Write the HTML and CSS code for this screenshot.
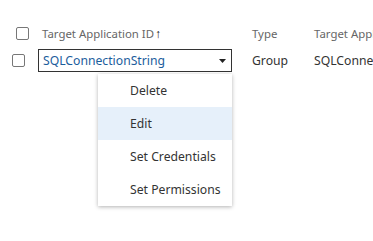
FILE: index.html
```html
<!DOCTYPE html>
<html>
  <head>
    <meta charset="utf-8">
    <title>Target Applications</title>
    <link rel="stylesheet" href="styles.css">
  </head>
  <body>
    <main class="list">
      <div class="head">
        <span class="check head-check"></span>
        <span class="col-id">Target Application ID<span class="sort">&#8593;</span></span>
        <span class="col-type">Type</span>
        <span class="col-name">Target Application Name</span>
      </div>
      <div class="row">
        <span class="check row-check"></span>
        <div class="picker">
          <span class="picker-text">SQLConnectionString</span>
          <svg class="caret" width="7" height="4" viewBox="0 0 7 4"><path d="M0 0h7L3.5 4z" fill="#222"/></svg>
        </div>
        <span class="col-type cell">Group</span>
        <span class="col-name cell">SQLConnectionString</span>
      </div>

      <ul class="menu">
        <li>Delete</li>
        <li class="active">Edit</li>
        <li>Set Credentials</li>
        <li>Set Permissions</li>
      </ul>
    </main>
  </body>
</html>
```

FILE: styles.css
```css
html, body {
  margin: 0;
  background: #fff;
  font-family: "Noto Sans", "Open Sans", sans-serif;
  overflow: hidden;
}
.list {
  position: relative;
  width: 373px;
  height: 241px;
  overflow: hidden;
}
.head {
  display: flex;
  align-items: center;
  height: 20px;
  padding-top: 23px;
  font-size: 11.4px;
  color: #666;
  white-space: nowrap;
}
.check {
  display: block;
  width: 11px;
  height: 11px;
  border: 1px solid #777;
  border-radius: 2px;
  flex: none;
}
.head-check {
  margin-left: 16px;
}
.col-id {
  margin-left: 13px;
  width: 210px;
  flex: none;
}
.sort {
  color: #111;
  font-size: 12px;
  font-weight: bold;
  margin-left: 1px;
}
.col-type {
  width: 62px;
  flex: none;
}
.col-name {
  flex: none;
}
.row {
  display: flex;
  align-items: center;
  margin-top: 6px;
  height: 23px;
  white-space: nowrap;
}
.row-check {
  margin-left: 12px;
}
.picker {
  display: flex;
  align-items: center;
  justify-content: space-between;
  margin-left: 13px;
  width: 188px;
  height: 21px;
  border: 1px solid #333;
  padding-left: 4px;
  flex: none;
  margin-right: 20px;
}
.picker-text {
  font-size: 12.2px;
  color: #1b5d9c;
}
.caret {
  margin-right: 5px;
}
.cell {
  font-size: 12.2px;
  color: #333;
}
.menu {
  position: absolute;
  left: 98px;
  top: 74px;
  width: 134px;
  margin: 0;
  padding: 0;
  list-style: none;
  background: #fff;
  box-shadow: 0 1px 4px rgba(0, 0, 0, 0.3);
}
.menu li {
  height: 33px;
  line-height: 34px;
  padding-left: 32px;
  font-size: 12.2px;
  color: #333;
}
.menu li.active {
  background: #e6f0fa;
}
```
